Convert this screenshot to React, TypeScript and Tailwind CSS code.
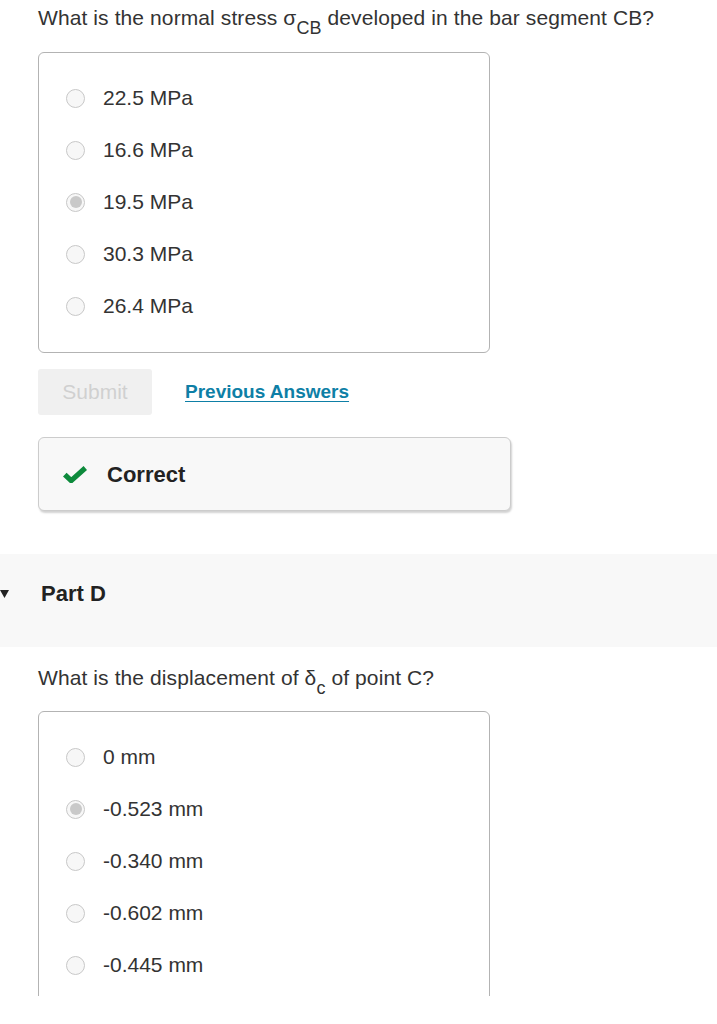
import React from "react";

const FONT = { fontFamily: '"Liberation Sans", Arial, sans-serif' };

function Radio({ checked }: { checked?: boolean }) {
  return (
    <span className="flex h-[19px] w-[19px] shrink-0 items-center justify-center rounded-full border border-[#c8c8c8] bg-[#f7f7f7]">
      {checked && <span className="h-[12px] w-[12px] rounded-full bg-[#c9c9c9]" />}
    </span>
  );
}

function Options({ items, selected }: { items: string[]; selected: number }) {
  return (
    <div className="flex flex-col gap-[26px] pl-[27px] pt-[32px] pb-[33px]">
      {items.map((t, i) => (
        <label key={t} className="flex h-[26px] items-center gap-[18px] text-[21px] text-[#333]">
          <Radio checked={i === selected} />
          <span>{t}</span>
        </label>
      ))}
    </div>
  );
}

export default function App() {
  return (
    <div className="h-[1024px] overflow-hidden bg-white" style={FONT}>
      <div className="h-[996px] overflow-hidden">
        <p className="pl-[38px] pt-[5px] text-[21px] tracking-[0.1px] leading-[26px] text-[#333]">
          What is the normal stress σ<sub className="text-[18px] align-[-4px] leading-none">CB</sub> developed in the bar segment CB?
        </p>

        <div className="ml-[38px] mt-[20px] w-[452px] rounded-[6px] border border-[#b3b3b3]">
          <Options items={["22.5 MPa", "16.6 MPa", "19.5 MPa", "30.3 MPa", "26.4 MPa"]} selected={2} />
        </div>

        <div className="ml-[38px] mt-[16px] flex items-center gap-[33px]">
          <button className="h-[46px] w-[114px] rounded-[3px] bg-[#f0f0f0] text-[21px] text-[#d0d0d0]">Submit</button>
          <a className="text-[19px] font-bold text-[#0e7fa6] underline underline-offset-[3px]">Previous Answers</a>
        </div>

        <div className="ml-[38px] mt-[22px] flex h-[74px] w-[473px] items-center gap-[20px] rounded-[6px] border border-[#cccccc] bg-[#f8f8f8] pl-[24px] shadow-[1px_2px_2px_rgba(0,0,0,0.18)]">
          <svg width="24" height="17" viewBox="0 0 24 17">
            <path d="M1.8 8.6 L8.2 14.6 L22.3 2" fill="none" stroke="#0d8a3c" strokeWidth="5.2" strokeLinejoin="miter" />
          </svg>
          <span className="text-[22px] font-bold text-[#222]">Correct</span>
        </div>

        <div className="mt-[43px] flex h-[93px] items-center bg-[#f8f8f8] pb-[14px]">
          <svg width="9" height="8" viewBox="0 0 9 8">
            <path d="M0 0 H9 L4.5 8 Z" fill="#222" />
          </svg>
          <span className="ml-[32px] text-[22px] font-bold text-[#222]">Part D</span>
        </div>

        <p className="pl-[38px] pt-[18px] text-[21px] tracking-[0.1px] leading-[26px] text-[#333]">
          What is the displacement of δ<sub className="text-[18px] align-[-4px] leading-none">c</sub> of point C?
        </p>

        <div className="ml-[38px] mt-[19px] w-[452px] rounded-[6px] border border-[#b3b3b3]">
          <Options items={["0 mm", "-0.523 mm", "-0.340 mm", "-0.602 mm", "-0.445 mm"]} selected={1} />
        </div>
      </div>
    </div>
  );
}
